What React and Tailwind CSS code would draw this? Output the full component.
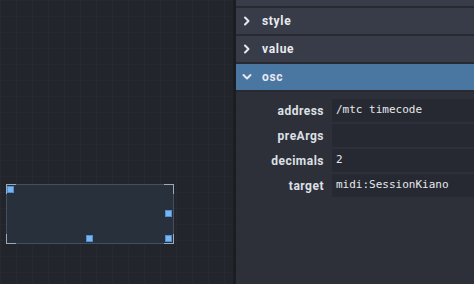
import React from "react";

const Chevron = ({ down }) => (
  <svg width="10" height="10" viewBox="0 0 10 10" className="shrink-0">
    {down ? (
      <polyline points="1.5,3 5,6.5 8.5,3" fill="none" stroke="#e6e9ee" strokeWidth="2" strokeLinecap="round" strokeLinejoin="round" />
    ) : (
      <polyline points="3,1.5 6.5,5 3,8.5" fill="none" stroke="#e6e9ee" strokeWidth="2" strokeLinecap="round" strokeLinejoin="round" />
    )}
  </svg>
);

const Header = ({ label, open }) => (
  <div
    className={`h-[28px] flex items-center gap-[10px] pl-[6px] border-b-2 border-[#272a31] ${
      open ? "bg-[#4a76a2]" : "bg-[#383c48]"
    }`}
  >
    <Chevron down={open} />
    <span className="text-[12px] font-bold tracking-[0.7px] text-[#e8eaef]">{label}</span>
  </div>
);

const Field = ({ label, value }) => (
  <div className="flex h-[23px]">
    <div className="w-[96px] shrink-0 flex items-center justify-end pr-[8px] text-[12px] font-bold tracking-[0.5px] text-[#dde0e6]">
      {label}
    </div>
    <div className="flex-1 bg-[#262931] flex items-center pl-[4px] text-[11px] text-[#e6e8ec] [font-family:'DejaVu_Sans_Mono',monospace]">
      {value}
    </div>
  </div>
);

const Handle = ({ className }) => (
  <div className={`absolute w-[7px] h-[7px] bg-[#79b5f2] border border-[#4f8fd0] ${className}`} />
);

export default function App() {
  return (
    <div className="w-[474px] h-[284px] flex overflow-hidden [font-family:Roboto,'Noto_Sans',sans-serif]">
      <div className="relative w-[233px] h-full bg-[#22252c] bg-[linear-gradient(to_right,rgba(255,255,255,0.018)_1px,transparent_1px),linear-gradient(to_bottom,rgba(255,255,255,0.018)_1px,transparent_1px)] bg-size-[16px_16px]">
        <div className="absolute left-[6px] top-[184px] w-[168px] h-[60px] bg-[#28303b] border border-[#45505e]">
          <div className="absolute -left-px -top-px w-[10px] h-[10px] border-l border-t border-[#9aaabb]" />
          <div className="absolute -right-px -top-px w-[10px] h-[10px] border-r border-t border-[#9aaabb]" />
          <div className="absolute -left-px -bottom-px w-[10px] h-[10px] border-l border-b border-[#9aaabb]" />
          <div className="absolute -right-px -bottom-px w-[10px] h-[10px] border-r border-b border-[#9aaabb]" />
        </div>
        <Handle className="left-[7px] top-[186px]" />
        <Handle className="left-[165px] top-[210px]" />
        <Handle className="left-[86px] top-[235px]" />
        <Handle className="left-[165px] top-[235px]" />
      </div>
      <div className="w-[3px] h-full bg-[#1b1d22]" />
      <div className="flex-1 h-full bg-[#2d3039] flex flex-col">
        <div className="h-[8px] shrink-0 bg-[#383c48] border-b-2 border-[#272a31]" />
        <Header label="style" />
        <Header label="value" />
        <Header label="osc" open />
        <div className="flex flex-col gap-[2px] pt-[7px]">
          <Field label="address" value="/mtc timecode" />
          <Field label="preArgs" value="" />
          <Field label="decimals" value="2" />
          <Field label="target" value="midi:SessionKiano" />
        </div>
      </div>
    </div>
  );
}
